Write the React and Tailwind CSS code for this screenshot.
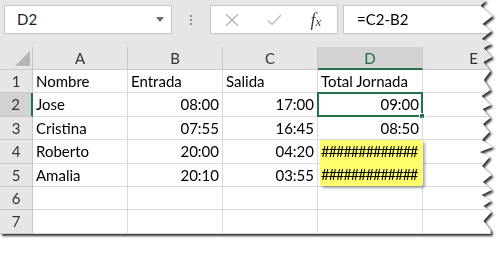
import React from "react";

const font = { fontFamily: "Lato, 'Open Sans', sans-serif" };

const COLS = ["A", "B", "C", "D", "E"];
const ROWS = [
  ["Nombre", "Entrada", "Salida", "Total Jornada"],
  ["Jose", "08:00", "17:00", "09:00"],
  ["Cristina", "07:55", "16:45", "08:50"],
  ["Roberto", "20:00", "04:20", ""],
  ["Amalia", "20:10", "03:55", ""],
  ["", "", "", ""],
  ["", "", "", ""],
];

// jagged "torn paper" outline for the right and bottom edges
function tornPolygon() {
  let seed = 23;
  const rnd = () => {
    seed = (seed * 9301 + 49297) % 233280;
    return seed / 233280;
  };
  const pts = ["0px 0px", "486px 0px"];
  let i = 0;
  for (let y = 6; y < 234; y += 4 + Math.round(rnd() * 6)) {
    const x = i % 2 ? 489 + rnd() * 4 : 480 + rnd() * 4;
    pts.push(`${x.toFixed(1)}px ${y}px`);
    i++;
  }
  pts.push("491px 241px");
  i = 0;
  for (let x = 484; x > 0; x -= 4 + Math.round(rnd() * 7)) {
    const y = i % 2 ? 242 + rnd() * 3 : 234 + rnd() * 3;
    pts.push(`${x}px ${y.toFixed(1)}px`);
    i++;
  }
  pts.push("0px 239px");
  return `polygon(${pts.join(", ")})`;
}

const clip = tornPolygon();

function Toolbar() {
  return (
    <div className="flex h-[47px] items-start bg-[#e6e6e6] pl-[4px] pt-[5px]">
      {/* name box */}
      <div className="flex h-[29px] w-[168px] items-center justify-between border border-[#c6c6c6] bg-white pl-[12px] pr-[7px]">
        <span className="text-[15px] text-[#222]">D2</span>
        <svg width="8" height="5" viewBox="0 0 8 5">
          <path d="M0 0h8L4 5z" fill="#6b6b6b" />
        </svg>
      </div>
      {/* grip dots */}
      <div className="flex h-[29px] w-[38px] flex-col items-center justify-center gap-[2px]">
        <span className="h-[2px] w-[2px] bg-[#8f8f8f]" />
        <span className="h-[2px] w-[2px] bg-[#8f8f8f]" />
        <span className="h-[2px] w-[2px] bg-[#8f8f8f]" />
      </div>
      {/* cancel / enter / fx */}
      <div className="flex h-[29px] w-[128px] items-center border border-[#c6c6c6] bg-white">
        <div className="flex w-[42px] justify-center">
          <svg width="14" height="14" viewBox="0 0 14 14">
            <path d="M1 1L13 13M13 1L1 13" stroke="#b3b3b3" strokeWidth="1.3" />
          </svg>
        </div>
        <div className="flex w-[42px] justify-center">
          <svg width="15" height="12" viewBox="0 0 15 12">
            <path d="M1 6.5L5 10.5L14 1" stroke="#bdbdbd" strokeWidth="1.4" fill="none" />
          </svg>
        </div>
        <div className="flex w-[42px] justify-center">
          <span
            className="text-[18px] italic leading-none text-[#444]"
            style={{ fontFamily: "'Liberation Serif', serif" }}
          >
            f<span className="text-[13px]">x</span>
          </span>
        </div>
      </div>
      {/* formula */}
      <div className="ml-[5px] flex h-[29px] flex-1 items-center border border-[#c6c6c6] bg-white pl-[13px]">
        <span className="text-[15px] text-black">=C2-B2</span>
      </div>
    </div>
  );
}

function Grid() {
  return (
    <div className="grid grid-cols-[33px_95px_95px_95px_105px_1fr] grid-rows-[23px] auto-rows-[23.4px] bg-white">
      {/* corner */}
      <div className="flex items-end justify-end border-b border-r border-[#c8c8c8] bg-[#e6e6e6] pb-[3px] pr-[2px]">
        <svg width="15" height="15" viewBox="0 0 15 15">
          <path d="M15 0V15H0z" fill="#b5b5b5" />
        </svg>
      </div>
      {COLS.map((c) => (
        <div
          key={c}
          className={
            c === "D"
              ? "flex items-center justify-center border-b-2 border-r border-b-[#217346] border-r-[#c8c8c8] bg-[#d2d2d2] pt-[2px] text-[15px] text-[#1e6b41]"
              : c === "E"
              ? "flex items-center justify-end border-b border-[#c8c8c8] bg-[#e6e6e6] pr-[22px] text-[15px] text-[#333]"
              : "flex items-center justify-center border-b border-r border-[#c8c8c8] bg-[#e6e6e6] text-[15px] text-[#333]"
          }
        >
          {c}
        </div>
      ))}

      {ROWS.map((r, ri) => (
        <React.Fragment key={ri}>
          <div
            className={
              ri === 1
                ? "flex items-center justify-center border-b border-r-2 border-b-[#c8c8c8] border-r-[#217346] bg-[#d2d2d2] text-[15px] text-[#333]"
                : "flex items-center justify-center border-b border-r border-[#c8c8c8] bg-[#e6e6e6] text-[15px] text-[#333]"
            }
          >
            {ri + 1}
          </div>
          {r.map((v, ci) => (
            <div
              key={ci}
              className={
                "relative flex items-center whitespace-nowrap border-b border-r border-[#d9d9d9] text-[15px] text-black " +
                (ri > 0 && ci > 0 ? "justify-end pr-[3px]" : "pl-[3px]")
              }
            >
              {v}
              {ri === 1 && ci === 3 && (
                <div className="absolute -left-[1px] -top-[1px] h-[25px] w-[106px] border-2 border-[#217346]">
                  <div className="absolute -bottom-[4px] -right-[4px] h-[6px] w-[6px] border border-white bg-[#217346]" />
                </div>
              )}
              {ri === 3 && ci === 3 && (
                <div className="absolute left-[2px] top-0 z-10 flex h-[46px] w-[103px] flex-col rounded-[2px] bg-[#ffff6e] shadow-[2px_2px_3px_rgba(0,0,0,0.35)]">
                  <div className="flex h-[23.4px] items-center pl-[1px] tracking-[-1.3px] text-black">#############</div>
                  <div className="flex h-[23.4px] items-center pl-[1px] tracking-[-1.3px] text-black">#############</div>
                </div>
              )}
            </div>
          ))}
          <div className="border-b border-[#d9d9d9]" />
        </React.Fragment>
      ))}
    </div>
  );
}

export default function App() {
  return (
    <div className="h-[257px] w-[500px] overflow-hidden bg-white" style={font}>
      <div className="drop-shadow-[2px_2px_1px_rgba(0,0,0,0.8)]">
        <div className="h-[257px] w-[500px] overflow-hidden" style={{ clipPath: clip }}>
          <Toolbar />
          <Grid />
        </div>
      </div>
    </div>
  );
}
